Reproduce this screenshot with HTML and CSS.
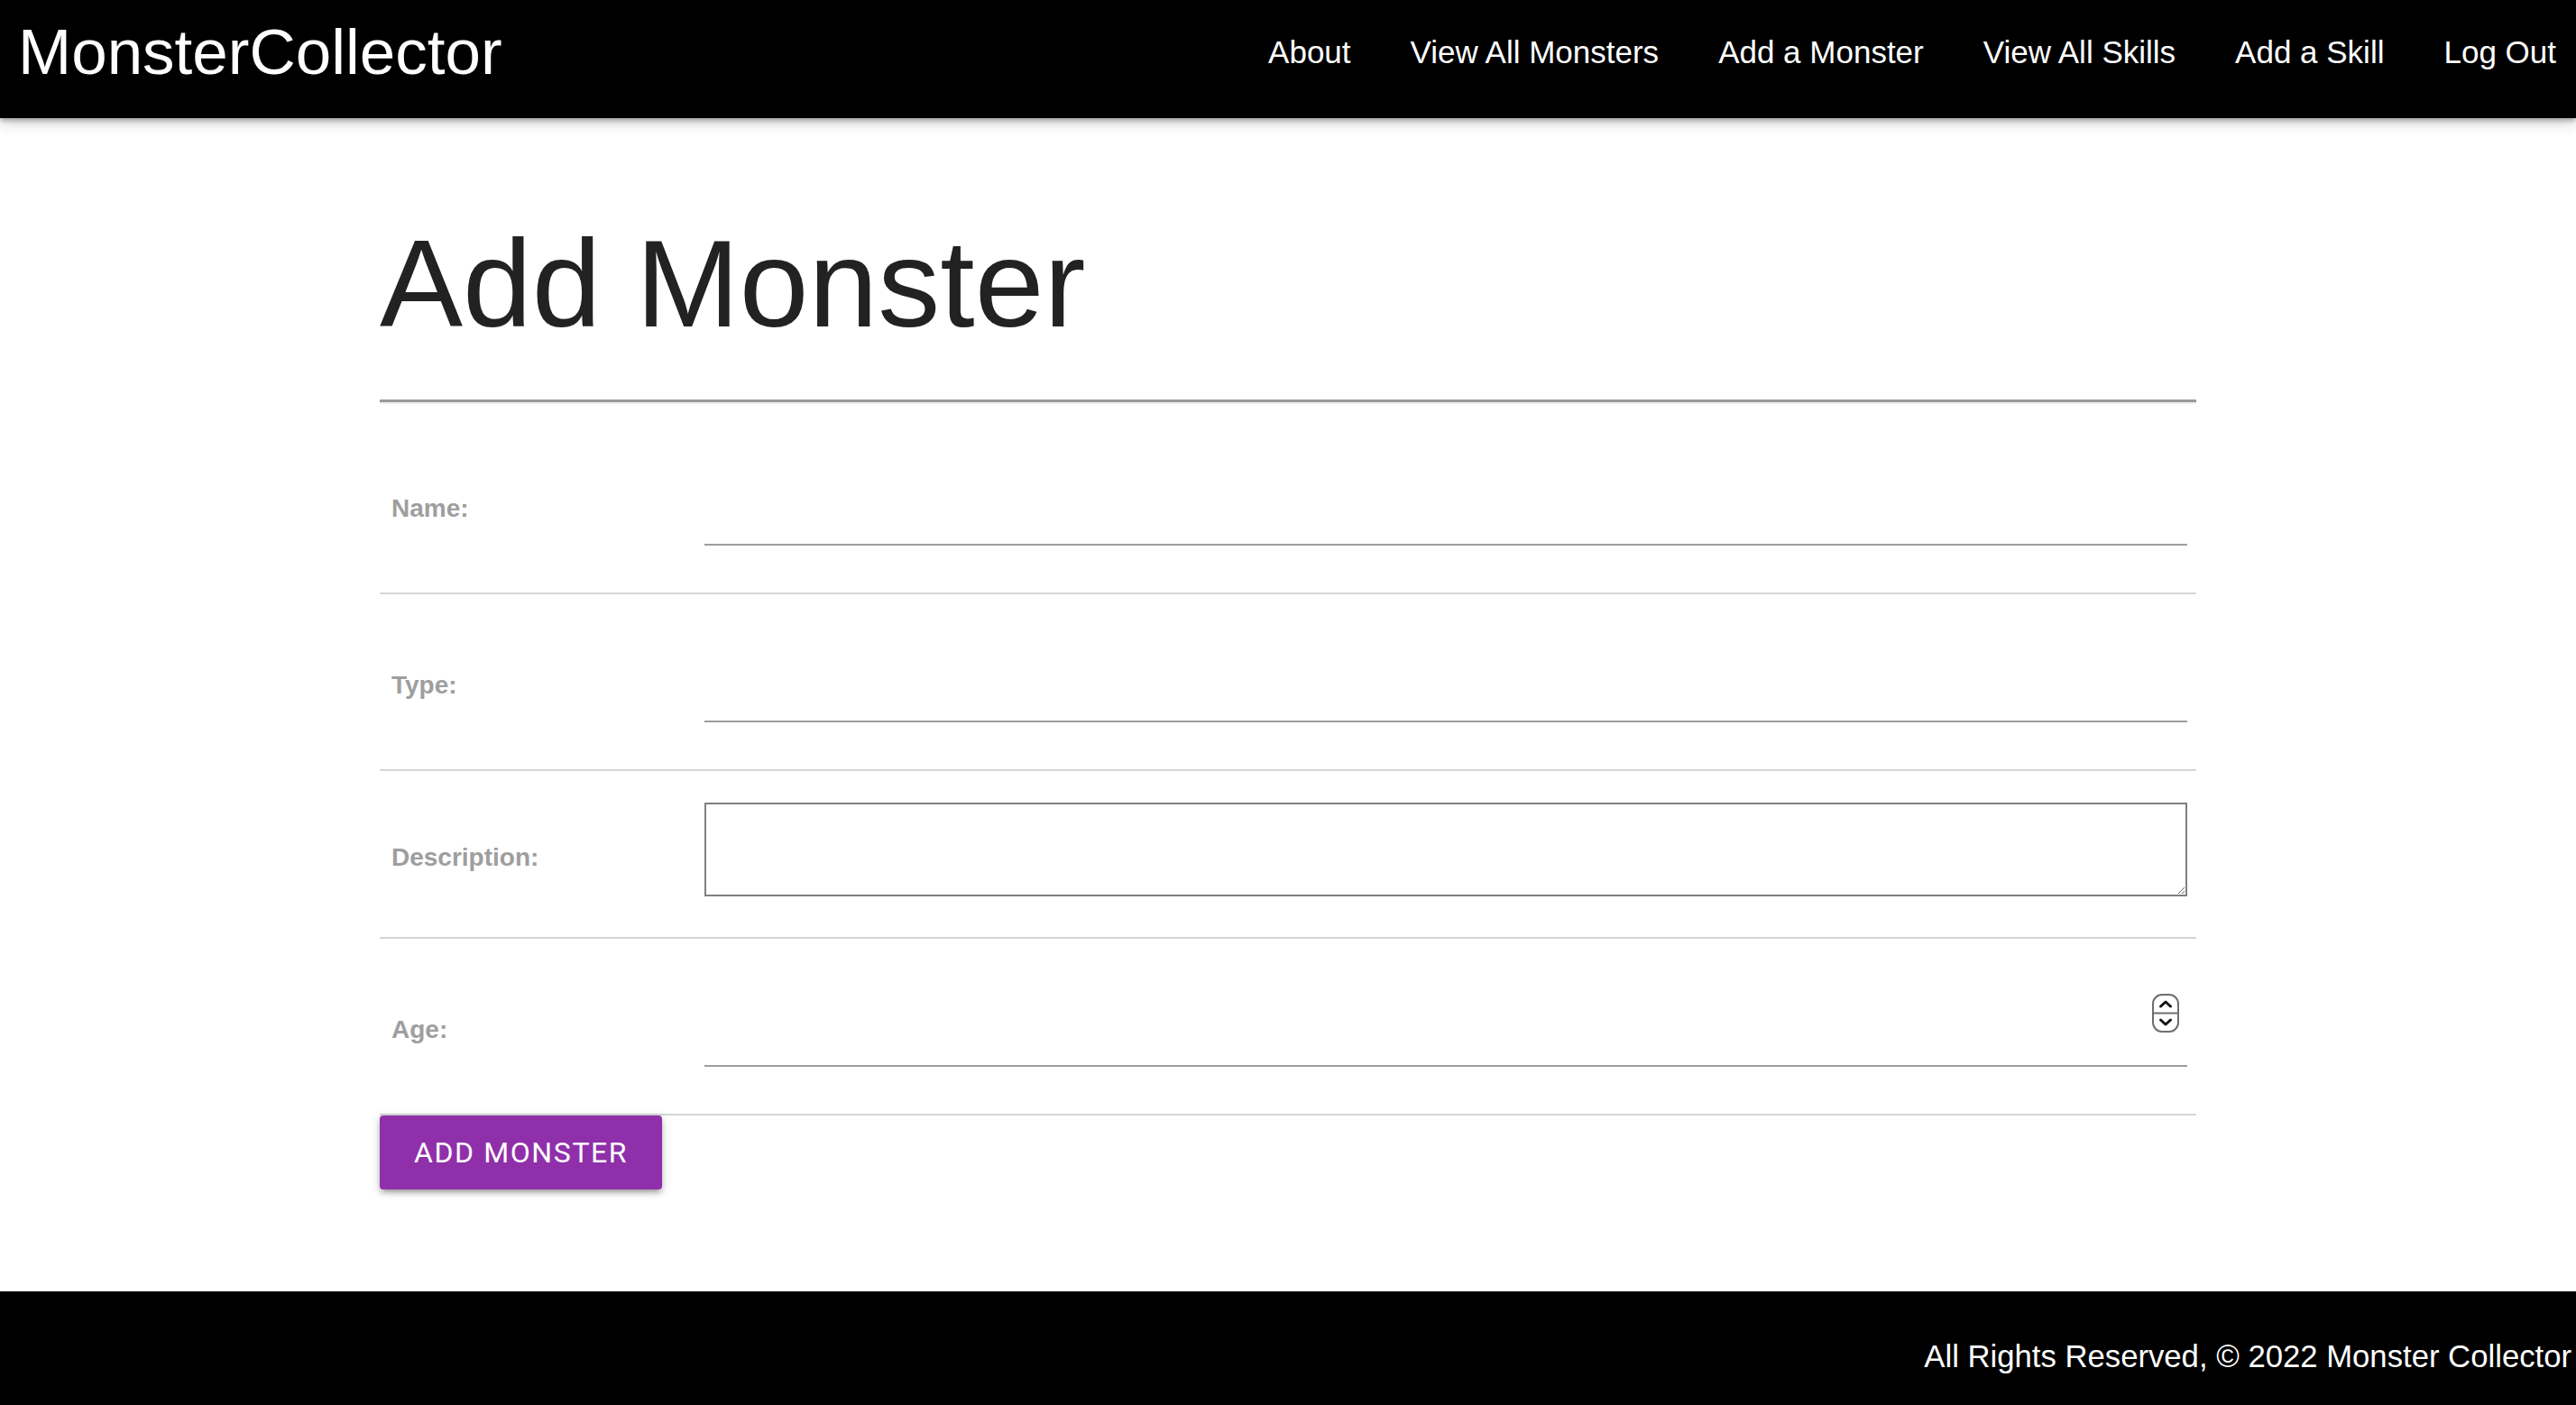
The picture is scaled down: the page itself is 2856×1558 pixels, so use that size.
FILE: index.html
```html
<!DOCTYPE html>
<html lang="en">
<head>
<meta charset="utf-8">
<title>Add Monster - MonsterCollector</title>
<link rel="stylesheet" href="styles.css">
</head>
<body>
<nav class="navbar">
  <a class="brand" href="#">MonsterCollector</a>
  <ul class="nav-links">
    <li><a href="#">About</a></li>
    <li><a href="#">View All Monsters</a></li>
    <li><a href="#">Add a Monster</a></li>
    <li><a href="#">View All Skills</a></li>
    <li><a href="#">Add a Skill</a></li>
    <li><a href="#">Log Out</a></li>
  </ul>
</nav>

<main class="main">
  <h1 class="page-title">Add Monster</h1>
  <hr class="divider">
  <form class="monster-form">
    <div class="form-table">
      <div class="form-row">
        <label class="form-label" for="name">Name:</label>
        <div class="field"><input class="text-input" type="text" id="name"></div>
      </div>
      <div class="form-row">
        <label class="form-label" for="type">Type:</label>
        <div class="field"><input class="text-input" type="text" id="type"></div>
      </div>
      <div class="form-row">
        <label class="form-label" for="description">Description:</label>
        <div class="field"><textarea class="text-area" id="description"></textarea></div>
      </div>
      <div class="form-row">
        <label class="form-label" for="age">Age:</label>
        <div class="field field-number">
          <input class="text-input" type="text" inputmode="numeric" id="age">
          <svg class="spinner" width="30" height="43" viewBox="0 0 30 43" aria-hidden="true">
            <rect x="1" y="1" width="28" height="41" rx="10" fill="none" stroke="#6e6e6e" stroke-width="2"/>
            <line x1="1" y1="21.5" x2="29" y2="21.5" stroke="#6e6e6e" stroke-width="2"/>
            <path d="M9.5 14 L15 9 L20.5 14" fill="none" stroke="#111" stroke-width="3" stroke-linecap="round" stroke-linejoin="round"/>
            <path d="M9.5 29 L15 34 L20.5 29" fill="none" stroke="#111" stroke-width="3" stroke-linecap="round" stroke-linejoin="round"/>
          </svg>
        </div>
      </div>
    </div>
    <button class="submit-btn" type="submit">Add Monster</button>
  </form>
</main>

<footer class="footer">
  <p class="footer-text">All Rights Reserved, © 2022 Monster Collector</p>
</footer>
</body>
</html>
```

FILE: styles.css
```css
* {
  box-sizing: border-box;
}

html,
body {
  margin: 0;
  padding: 0;
}

body {
  min-height: 100vh;
  display: flex;
  flex-direction: column;
  background: #ffffff;
  font-family: "Liberation Sans", Arial, sans-serif;
  color: #222222;
}

/* ---------- Navbar ---------- */
.navbar {
  position: relative;
  z-index: 1;
  height: 131px;
  flex: none;
  background: #000000;
  display: flex;
  align-items: center;
  justify-content: space-between;
  padding: 0 22px 16px 20px;
  box-shadow: 0 3px 5px rgba(0, 0, 0, 0.28), 0 7px 14px rgba(0, 0, 0, 0.14);
}

.brand {
  color: #ffffff;
  font-size: 71px;
  text-decoration: none;
}

.nav-links {
  display: flex;
  gap: 66px;
  list-style: none;
  margin: 0;
  padding: 0;
}

.nav-links a {
  color: #ffffff;
  font-size: 35px;
  text-decoration: none;
}

/* ---------- Main ---------- */
.main {
  flex: none;
  width: 2014px;
  margin: 0 auto;
}

.page-title {
  margin: 107px 0 0;
  font-size: 138px;
  font-weight: 400;
  line-height: 152px;
  color: #222222;
}

.divider {
  height: 0;
  margin: 53px 0 15px;
  border: 0;
  border-top: 3px solid #9a9a9a;
  border-bottom: 2px solid #ededed;
}

.form-row {
  display: grid;
  grid-template-columns: 350px 1fr;
  align-items: center;
  padding: 33px 10px;
  border-bottom: 2px solid #d6d6d6;
}

.form-label {
  margin-left: 3px;
  padding-top: 7px;
  font-size: 28px;
  font-weight: 700;
  color: #9e9e9e;
}

.field {
  position: relative;
}

.text-input {
  display: block;
  width: 100%;
  height: 109px;
  margin: 0 0 19px;
  padding: 0;
  border: 0;
  border-bottom: 2px solid #9e9e9e;
  background: transparent;
  outline: none;
  font-family: "Liberation Sans", Arial, sans-serif;
  font-size: 36px;
  color: #222222;
}

.text-area {
  display: block;
  width: 100%;
  height: 104px;
  margin: 2px 0 12px;
  padding: 4px;
  border: 2px solid #808080;
  border-radius: 0;
  background: #ffffff;
  outline: none;
  font-family: "Liberation Sans", Arial, sans-serif;
  font-size: 28px;
}

.spinner {
  position: absolute;
  right: 9px;
  top: 28px;
}

/* ---------- Button ---------- */
.submit-btn {
  display: inline-block;
  height: 82px;
  padding: 0 38px;
  border: 0;
  border-radius: 4px;
  background: #8f30aa;
  color: #ffffff;
  font-family: Roboto, "Liberation Sans", Arial, sans-serif;
  font-size: 32px;
  font-weight: 400;
  letter-spacing: 1.6px;
  text-transform: uppercase;
  box-shadow: 0 5px 5px 0 rgba(0, 0, 0, 0.14), 0 7px 2px -5px rgba(0, 0, 0, 0.12), 0 2px 11px 0 rgba(0, 0, 0, 0.2);
  cursor: pointer;
}

/* ---------- Footer ---------- */
.footer {
  flex: none;
  margin-top: auto;
  height: 126px;
  background: #000000;
  color: #ffffff;
  display: flex;
  align-items: center;
  justify-content: flex-end;
  padding: 18px 5px 0 0;
}

.footer-text {
  margin: 0;
  font-size: 34.7px;
}
```
